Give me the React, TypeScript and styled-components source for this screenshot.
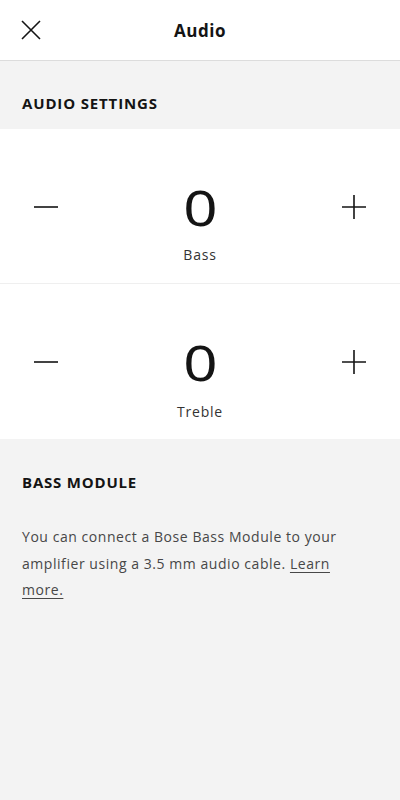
import styled, { createGlobalStyle } from "styled-components";

const GlobalStyle = createGlobalStyle`
  html, body {
    margin: 0;
    padding: 0;
    background: #f3f3f3;
  }
  body {
    font-family: "Open Sans", "Noto Sans", sans-serif;
    color: #141414;
  }
`;

const Page = styled.div`
  width: 400px;
  min-height: 800px;
  background: #f3f3f3;
`;

const TopBar = styled.header`
  height: 60px;
  background: #fff;
  border-bottom: 1px solid #dcdcdc;
  display: grid;
  grid-template-columns: 60px 1fr 60px;
  align-items: center;
`;

const IconButton = styled.button`
  border: 0;
  background: none;
  padding: 0;
  height: 46px;
  display: flex;
  align-items: center;
  justify-content: center;
  color: #141414;
  cursor: pointer;
`;

const CloseButton = styled(IconButton)`
  justify-content: flex-start;
  padding-left: 21px;
`;

const Title = styled.h1`
  margin: 0;
  text-align: center;
  font-size: 17px;
  font-weight: 700;
  letter-spacing: 0.5px;
`;

const SectionTitle = styled.h2`
  margin: 0;
  padding: 32px 22px 16px;
  font-size: 15px;
  font-weight: 700;
  letter-spacing: 0.85px;
  text-transform: uppercase;
`;

const Controls = styled.section`
  background: #fff;
`;

const Stepper = styled.div`
  height: 155px;
  box-sizing: border-box;
  padding-top: 55px;
  display: grid;
  grid-template-columns: 92px 1fr 92px;
  align-items: start;

  &:not(:last-child) {
    border-bottom: 1px solid #efefef;
  }
`;

const Value = styled.div`
  display: flex;
  flex-direction: column;
  align-items: center;
`;

const Number = styled.span`
  font-family: "Noto Sans", sans-serif;
  font-size: 50px;
  font-weight: 400;
  line-height: 46px;
  transform: scaleX(1.2);
`;

const Label = styled.span<{ $gap: number }>`
  margin-top: ${(p) => p.$gap}px;
  font-size: 14px;
  line-height: 18px;
  letter-spacing: 0.8px;
  color: #333;
`;

const ModuleBlock = styled.section`
  padding: 33px 22px;
`;

const ModuleTitle = styled.h2`
  margin: 0 0 32px;
  font-size: 15px;
  font-weight: 700;
  letter-spacing: 0.8px;
`;

const Paragraph = styled.p`
  margin: 0;
  max-width: 322px;
  font-size: 14px;
  line-height: 26.5px;
  letter-spacing: 0.55px;
  color: #474747;
`;

const LearnMore = styled.a`
  color: #474747;
  text-decoration: underline;
  text-underline-offset: 3px;
`;

const Line = ({ d }: { d: string }) => (
  <path d={d} stroke="currentColor" strokeWidth={1.6} fill="none" />
);

function StepperRow({ label, gap }: { label: string; gap: number }) {
  return (
    <Stepper>
      <IconButton aria-label={`decrease ${label}`}>
        <svg width="26" height="26" viewBox="0 0 26 26">
          <Line d="M1 13H25" />
        </svg>
      </IconButton>
      <Value>
        <Number>0</Number>
        <Label $gap={gap}>{label}</Label>
      </Value>
      <IconButton aria-label={`increase ${label}`}>
        <svg width="26" height="26" viewBox="0 0 26 26">
          <Line d="M1 13H25M13 1V25" />
        </svg>
      </IconButton>
    </Stepper>
  );
}

export default function App() {
  return (
    <Page>
      <GlobalStyle />
      <TopBar>
        <CloseButton aria-label="close">
          <svg width="20" height="20" viewBox="0 0 20 20">
            <Line d="M1 1L19 19M19 1L1 19" />
          </svg>
        </CloseButton>
        <Title>Audio</Title>
        <span />
      </TopBar>
      <SectionTitle>Audio Settings</SectionTitle>
      <Controls>
        <StepperRow label="Bass" gap={16} />
        <StepperRow label="Treble" gap={18} />
      </Controls>
      <ModuleBlock>
        <ModuleTitle>BASS MODULE</ModuleTitle>
        <Paragraph>
          You can connect a Bose Bass Module to your amplifier using a 3.5 mm
          audio cable. <LearnMore href="#">Learn more.</LearnMore>
        </Paragraph>
      </ModuleBlock>
    </Page>
  );
}
